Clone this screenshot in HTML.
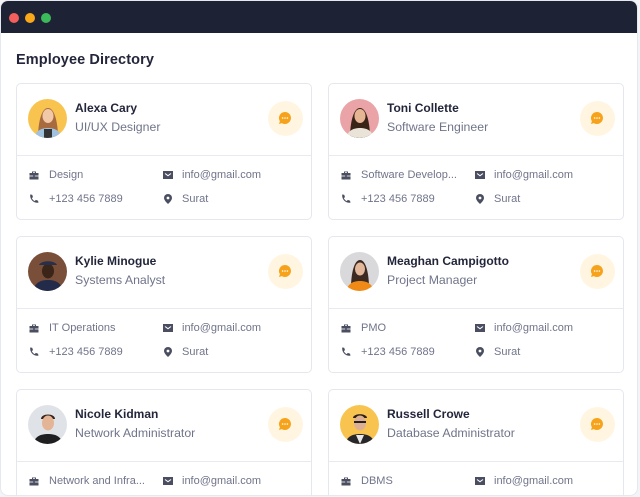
<!DOCTYPE html>
<html><head><meta charset="utf-8"><style>
*{margin:0;padding:0;box-sizing:border-box}
html,body{width:640px;height:497px;overflow:hidden}
body{background:#f3f4f8;font-family:"Liberation Sans",sans-serif;position:relative}
.win{position:absolute;left:0;top:0;width:638px;height:496px;background:#fff;border:1px solid #e6e8ef;border-radius:8px;overflow:hidden}
.bar{position:absolute;left:0;top:0;right:0;height:32px;background:#1e2235}
.dot{position:absolute;top:12px;width:10px;height:10px;border-radius:50%}
h1{position:absolute;left:15px;top:51px;font-size:14.5px;font-weight:bold;color:#23263a;letter-spacing:.1px}
.card{position:absolute;width:296px;height:137px;border:1px solid #e5e7ee;border-radius:5px;background:#fff}
.card.last{height:108px;border-bottom:none;border-radius:5px 5px 0 0}
.av{position:absolute;left:11px;top:15px;width:39px;height:39px;border-radius:50%;overflow:hidden}
.nm{position:absolute;left:58px;top:17px;font-size:12px;font-weight:bold;color:#23263a}
.rl{position:absolute;left:58px;top:36px;font-size:12.3px;color:#70748a}
.chat{position:absolute;left:251px;top:17px;width:35px;height:35px;border-radius:50%;background:#fff5e1}
.div{position:absolute;left:0;right:0;top:71px;height:1px;background:#e8eaf0}
.it{position:absolute;font-size:11px;color:#70748a;white-space:nowrap}
.ic{position:absolute}
</style></head><body>
<svg width="0" height="0" style="position:absolute">
<defs>
<symbol id="bag" viewBox="0 0 12 12"><path d="M4 2.5h4v1.5h2.5v6.5h-9v-6.5h2.5z M5 3.3v0.7h2v-0.7z" fill="#4a4e60" fill-rule="evenodd"/><rect x="1.5" y="6.6" width="9" height="0.8" fill="#fff"/><rect x="5.2" y="6" width="1.6" height="1.8" fill="#4a4e60"/></symbol>
<symbol id="mail" viewBox="0 0 12 12"><rect x="1" y="2" width="10" height="8" fill="#4a4e60"/><path d="M3 4.5l3 2.2 3-2.2" stroke="#fff" stroke-width="1" fill="none"/></symbol>
<symbol id="ph" viewBox="0 0 12 12"><path d="M2.2 1.5l2 0.3 0.8 2.3-1.2 1c0.6 1.3 1.7 2.4 3 3l1-1.2 2.3 0.8 0.3 2c-5 0.5-8.7-3.2-8.2-8.2z" fill="#4a4e60"/></symbol>
<symbol id="pin" viewBox="0 0 12 12"><path d="M6 1a4 4 0 0 1 4 4c0 2.5-4 6-4 6s-4-3.5-4-6a4 4 0 0 1 4-4z" fill="#4a4e60"/><circle cx="6" cy="5" r="1.4" fill="#fff"/></symbol>
<symbol id="ch" viewBox="0 0 14 14"><path d="M7 1a6 6 0 1 1-3.2 11.1L1 13l0.9-2.8A6 6 0 0 1 7 1z" fill="#f6a31b"/><circle cx="4.6" cy="7" r=".8" fill="#fff"/><circle cx="7" cy="7" r=".8" fill="#fff"/><circle cx="9.4" cy="7" r=".8" fill="#fff"/></symbol>
</defs></svg>
<div class="win">
<div class="bar"><div class="dot" style="left:8px;background:#f25f5c"></div><div class="dot" style="left:24px;background:#f9a81a"></div><div class="dot" style="left:40px;background:#3cb95a"></div></div>
<h1>Employee Directory</h1>

<div class="card" style="left:15px;top:82px">
<div class="av"><svg width="39" height="39"><rect width="39" height="39" fill="#f8c44f"/><path d="M10 39c0-14 3-30 10-30s10 16 10 30z" fill="#a86a3f"/><ellipse cx="20" cy="17" rx="5.5" ry="7" fill="#f1c8a8"/><path d="M6 39c2-8 8-10 14-10s12 2 14 10z" fill="#9ec2df"/><rect x="16" y="30" width="8" height="9" fill="#333"/></svg></div>
<div class="nm">Alexa Cary</div><div class="rl">UI/UX Designer</div>
<div class="chat"><svg class="ic" style="left:10px;top:10px" width="14" height="14"><use href="#ch"/></svg></div>
<div class="div"></div>
<svg class="ic" style="left:11px;top:85px" width="12" height="12"><use href="#bag"/></svg><div class="it" style="left:32px;top:85px">Design</div>
<svg class="ic" style="left:145px;top:85px" width="12" height="12"><use href="#mail"/></svg><div class="it" style="left:165px;top:85px">info@gmail.com</div>
<svg class="ic" style="left:11px;top:109px" width="12" height="12"><use href="#ph"/></svg><div class="it" style="left:32px;top:109px">+123 456 7889</div>
<svg class="ic" style="left:145px;top:109px" width="12" height="12"><use href="#pin"/></svg><div class="it" style="left:165px;top:109px">Surat</div>
</div>

<div class="card" style="left:327px;top:82px">
<div class="av"><svg width="39" height="39"><rect width="39" height="39" fill="#eaa3a6"/><path d="M10 39c0-14 3-30 10-30s10 16 10 30z" fill="#3a2418"/><ellipse cx="20" cy="17" rx="5.5" ry="7" fill="#e5b594"/><path d="M6 39c2-8 8-10 14-10s12 2 14 10z" fill="#e9e3d8"/></svg></div>
<div class="nm">Toni Collette</div><div class="rl">Software Engineer</div>
<div class="chat"><svg class="ic" style="left:10px;top:10px" width="14" height="14"><use href="#ch"/></svg></div>
<div class="div"></div>
<svg class="ic" style="left:11px;top:85px" width="12" height="12"><use href="#bag"/></svg><div class="it" style="left:32px;top:85px">Software Develop...</div>
<svg class="ic" style="left:145px;top:85px" width="12" height="12"><use href="#mail"/></svg><div class="it" style="left:165px;top:85px">info@gmail.com</div>
<svg class="ic" style="left:11px;top:109px" width="12" height="12"><use href="#ph"/></svg><div class="it" style="left:32px;top:109px">+123 456 7889</div>
<svg class="ic" style="left:145px;top:109px" width="12" height="12"><use href="#pin"/></svg><div class="it" style="left:165px;top:109px">Surat</div>
</div>

<div class="card" style="left:15px;top:235px">
<div class="av"><svg width="39" height="39"><rect width="39" height="39" fill="#7a4f3a"/><ellipse cx="20" cy="19" rx="6" ry="7.5" fill="#3b2418"/><path d="M11 13c2-5 16-5 18 0z" fill="#283049"/><path d="M5 39c2-9 8-11 15-11s13 2 15 11z" fill="#222b4a"/></svg></div>
<div class="nm">Kylie Minogue</div><div class="rl">Systems Analyst</div>
<div class="chat"><svg class="ic" style="left:10px;top:10px" width="14" height="14"><use href="#ch"/></svg></div>
<div class="div"></div>
<svg class="ic" style="left:11px;top:85px" width="12" height="12"><use href="#bag"/></svg><div class="it" style="left:32px;top:85px">IT Operations</div>
<svg class="ic" style="left:145px;top:85px" width="12" height="12"><use href="#mail"/></svg><div class="it" style="left:165px;top:85px">info@gmail.com</div>
<svg class="ic" style="left:11px;top:109px" width="12" height="12"><use href="#ph"/></svg><div class="it" style="left:32px;top:109px">+123 456 7889</div>
<svg class="ic" style="left:145px;top:109px" width="12" height="12"><use href="#pin"/></svg><div class="it" style="left:165px;top:109px">Surat</div>
</div>

<div class="card" style="left:327px;top:235px">
<div class="av"><svg width="39" height="39"><rect width="39" height="39" fill="#d9d9db"/><path d="M11 36c0-14 3-28 9-28s9 14 9 28z" fill="#3b2a22"/><ellipse cx="20" cy="17" rx="5" ry="6.5" fill="#e2b79a"/><path d="M6 39c2-8 8-10 14-10s12 2 14 10z" fill="#ef8a16"/></svg></div>
<div class="nm">Meaghan Campigotto</div><div class="rl">Project Manager</div>
<div class="chat"><svg class="ic" style="left:10px;top:10px" width="14" height="14"><use href="#ch"/></svg></div>
<div class="div"></div>
<svg class="ic" style="left:11px;top:85px" width="12" height="12"><use href="#bag"/></svg><div class="it" style="left:32px;top:85px">PMO</div>
<svg class="ic" style="left:145px;top:85px" width="12" height="12"><use href="#mail"/></svg><div class="it" style="left:165px;top:85px">info@gmail.com</div>
<svg class="ic" style="left:11px;top:109px" width="12" height="12"><use href="#ph"/></svg><div class="it" style="left:32px;top:109px">+123 456 7889</div>
<svg class="ic" style="left:145px;top:109px" width="12" height="12"><use href="#pin"/></svg><div class="it" style="left:165px;top:109px">Surat</div>
</div>

<div class="card last" style="left:15px;top:388px">
<div class="av"><svg width="39" height="39"><rect width="39" height="39" fill="#dfe3e8"/><path d="M13 14c0-6 14-6 14 0z" fill="#3a2419"/><ellipse cx="20" cy="18" rx="6" ry="7.5" fill="#e3b596"/><path d="M5 39c2-8 8-10 15-10s13 2 15 10z" fill="#1f1f22"/></svg></div>
<div class="nm">Nicole Kidman</div><div class="rl">Network Administrator</div>
<div class="chat"><svg class="ic" style="left:10px;top:10px" width="14" height="14"><use href="#ch"/></svg></div>
<div class="div"></div>
<svg class="ic" style="left:11px;top:85px" width="12" height="12"><use href="#bag"/></svg><div class="it" style="left:32px;top:85px">Network and Infra...</div>
<svg class="ic" style="left:145px;top:85px" width="12" height="12"><use href="#mail"/></svg><div class="it" style="left:165px;top:85px">info@gmail.com</div>
</div>

<div class="card last" style="left:327px;top:388px">
<div class="av"><svg width="39" height="39"><rect width="39" height="39" fill="#f8c44f"/><path d="M13 13c0-5 14-5 14 0z" fill="#2a1c16"/><ellipse cx="20" cy="18" rx="6" ry="7.5" fill="#deb093"/><rect x="14" y="16" width="12" height="2" fill="#222"/><path d="M5 39c2-8 8-10 15-10s13 2 15 10z" fill="#27272b"/><path d="M16 30l4 9 4-9z" fill="#e8e8e8"/></svg></div>
<div class="nm">Russell Crowe</div><div class="rl">Database Administrator</div>
<div class="chat"><svg class="ic" style="left:10px;top:10px" width="14" height="14"><use href="#ch"/></svg></div>
<div class="div"></div>
<svg class="ic" style="left:11px;top:85px" width="12" height="12"><use href="#bag"/></svg><div class="it" style="left:32px;top:85px">DBMS</div>
<svg class="ic" style="left:145px;top:85px" width="12" height="12"><use href="#mail"/></svg><div class="it" style="left:165px;top:85px">info@gmail.com</div>
</div>
</div>
</body></html>
